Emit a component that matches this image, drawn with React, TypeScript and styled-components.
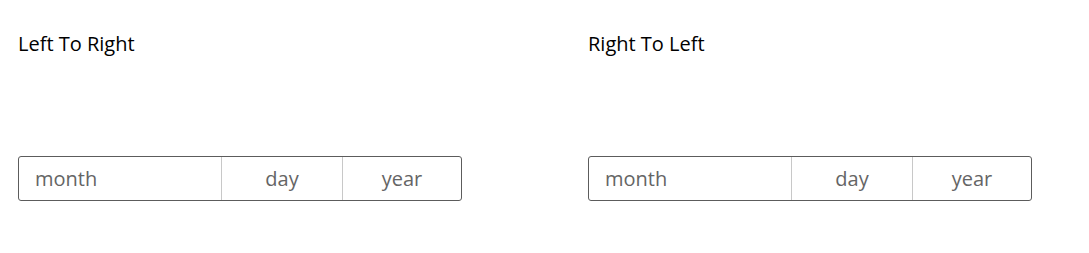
import styled, { createGlobalStyle } from 'styled-components';

const GlobalStyle = createGlobalStyle`
  body {
    margin: 0;
    background: #fff;
    font-family: "Open Sans", "Noto Sans", sans-serif;
  }
`;

const Page = styled.div`
  display: grid;
  grid-template-columns: 570px 1fr;
  padding: 30px 0 0 18px;
`;

const Section = styled.section`
  display: flex;
  flex-direction: column;
  gap: 99px;
`;

const Title = styled.div`
  font-size: 20px;
  line-height: 27px;
  color: #000;
`;

const Picker = styled.div`
  display: grid;
  grid-template-columns: 202px 121px 119px;
  width: 444px;
  height: 45px;
  box-sizing: border-box;
  border: 1px solid #5c5c5c;
  border-radius: 3px;
  overflow: hidden;
`;

const Field = styled.div<{ $align: 'left' | 'center'; $divider?: boolean }>`
  display: flex;
  align-items: center;
  justify-content: ${(p) => (p.$align === 'left' ? 'flex-start' : 'center')};
  padding: 0 0 0 ${(p) => (p.$align === 'left' ? '16px' : '0')};
  border-left: ${(p) => (p.$divider ? '1px solid #c8c8c8' : 'none')};
  font-size: 20px;
  color: #656565;
`;

function DatePicker() {
  return (
    <Picker>
      <Field $align="left">month</Field>
      <Field $align="center" $divider>day</Field>
      <Field $align="center" $divider>year</Field>
    </Picker>
  );
}

export default function App() {
  return (
    <>
      <GlobalStyle />
      <Page>
        <Section>
          <Title>Left To Right</Title>
          <DatePicker />
        </Section>
        <Section>
          <Title>Right To Left</Title>
          <DatePicker />
        </Section>
      </Page>
    </>
  );
}
